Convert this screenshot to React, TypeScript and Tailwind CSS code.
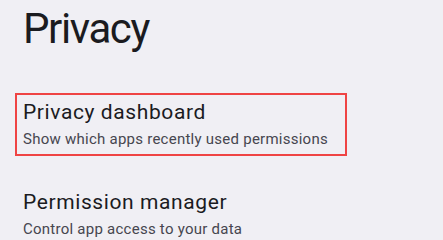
import React from "react";

type Item = { title: string; summary: string; highlighted?: boolean };

const ITEMS: Item[] = [
  { title: "Privacy dashboard", summary: "Show which apps recently used permissions", highlighted: true },
  { title: "Permission manager", summary: "Control app access to your data" },
];

function SettingRow({ item }: { item: Item }) {
  return (
    <div
      className={[
        "w-[332px] border-2 pl-[6px] pt-[3px] pb-[5px]",
        item.highlighted ? "border-[#ef4444]" : "border-transparent",
      ].join(" ")}
    >
      <div className="text-[21px] leading-[28px] tracking-[0.6px] text-[#1b1b1f]">{item.title}</div>
      <div className="mt-[3px] text-[15px] leading-[20px] tracking-[0.25px] text-[#46464f]">{item.summary}</div>
    </div>
  );
}

export default function App() {
  return (
    <div className="h-[240px] w-[443px] overflow-hidden bg-[#f0eff4] font-['Roboto',sans-serif]">
      <h1 className="pl-[23px] pt-[8px] text-[42px] leading-[42px] tracking-[-1.4px] font-normal text-[#1b1b1f]">
        Privacy
      </h1>
      <div className="mt-[43px] flex flex-col gap-[27px] pl-[15px]">
        {ITEMS.map((item) => (
          <SettingRow key={item.title} item={item} />
        ))}
      </div>
    </div>
  );
}
